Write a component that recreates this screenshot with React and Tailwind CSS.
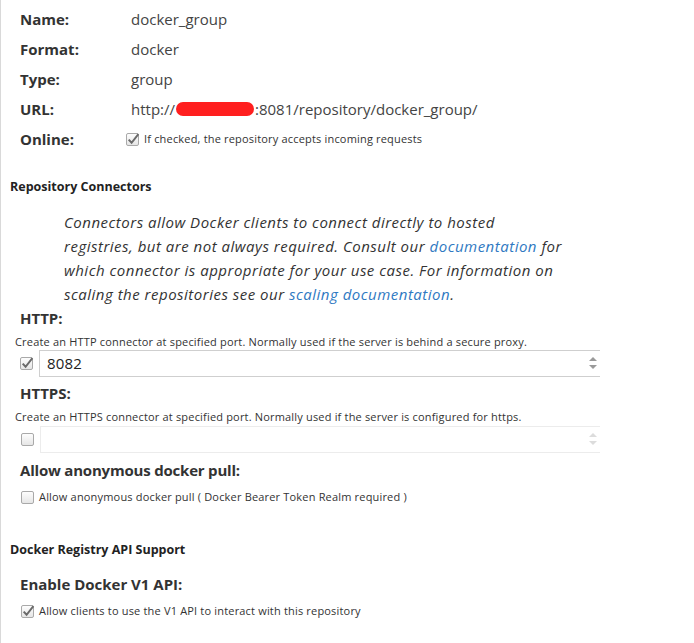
import React from 'react';

const font = { fontFamily: '"Open Sans", Arial, sans-serif' };

function Check({ checked, className = '' }) {
  return (
    <span className={`relative inline-block h-[13px] w-[13px] shrink-0 rounded-[2px] border border-[#a9a9a9] bg-gradient-to-b from-[#fdfdfd] to-[#e6e6e6] ${className}`}>
      {checked && (
        <svg viewBox="0 0 13 13" className="absolute left-[-1px] top-[-2px] h-[14px] w-[14px]">
          <path d="M2.5 7 L5.2 10 L11.5 2" fill="none" stroke="#6a6a6a" strokeWidth="1.8" />
        </svg>
      )}
    </span>
  );
}

function PortInput({ value, disabled }) {
  return (
    <div className={`flex h-[27px] flex-1 items-center border-y border-l ${disabled ? 'border-[#ececec]' : 'border-[#cfcfcf]'} pl-[7px] pr-[3px]`}>
      <span className="flex-1 text-[15px] text-[#222]">{value}</span>
      <svg viewBox="0 0 8 12" className="h-[12px] w-[8px]">
        <path d="M0 4 L4 0 L8 4 Z M0 8 L8 8 L4 12 Z" fill={disabled ? '#dcdcdc' : '#9a9a9a'} />
      </svg>
    </div>
  );
}

const rows = [
  ['Name:', 'docker_group'],
  ['Format:', 'docker'],
  ['Type:', 'group'],
];

export default function App() {
  return (
    <div className="min-h-[643px] w-[694px] border-l border-[#d9d9d9] bg-white text-[#333]" style={font}>
      <div className="pt-[4px]">
        {rows.map(([label, value]) => (
          <div key={label} className="flex h-[30px] items-center">
            <span className="w-[130px] pl-[19px] text-[15px] font-bold text-[#333]">{label}</span>
            <span className="text-[15px] text-[#444]">{value}</span>
          </div>
        ))}
        <div className="flex h-[30px] items-center">
          <span className="w-[130px] pl-[19px] text-[15px] font-bold text-[#333]">URL:</span>
          <span className="flex items-center text-[15px] text-[#444]">
            http://
            <span className="mx-[1px] inline-block h-[14px] w-[78px] rounded-[7px] bg-[#ff1f1f]" />
            :8081/repository/docker_group/
          </span>
        </div>
        <div className="flex h-[30px] items-center">
          <span className="w-[125px] pl-[19px] text-[15px] font-bold text-[#333]">Online:</span>
          <Check checked />
          <span className="ml-[5px] text-[11px] tracking-[0.18px] text-[#333]">If checked, the repository accepts incoming requests</span>
        </div>
      </div>

      <h3 className="mt-[24px] pl-[9px] text-[12.5px] font-bold text-[#222]">Repository Connectors</h3>

      <p className="mt-[13px] box-content w-[500px] pl-[63px] text-[15px] italic leading-[24px] tracking-[0.5px] text-[#333]">
        Connectors allow Docker clients to connect directly to hosted registries, but are not always required. Consult our{' '}
        <a className="text-[#2f79c2]">documentation</a> for which connector is appropriate for your use case. For information on
        scaling the repositories see our <a className="text-[#2f79c2]">scaling documentation</a>.
      </p>

      <div className="w-[599px] pl-[14px] tracking-[0.18px]">
        <h4 className="mt-[2px] pl-[5px] text-[15px] font-bold leading-[20px] tracking-normal">HTTP:</h4>
        <p className="mt-[7px] text-[11px] leading-[14px] text-[#333]">
          Create an HTTP connector at specified port. Normally used if the server is behind a secure proxy.
        </p>
        <div className="mt-[1px] flex items-center gap-[6px] pl-[5px]">
          <Check checked />
          <PortInput value="8082" />
        </div>

        <h4 className="mt-[6px] pl-[5px] text-[15px] font-bold leading-[20px] tracking-normal">HTTPS:</h4>
        <p className="mt-[7px] text-[11px] leading-[14px] text-[#333]">
          Create an HTTPS connector at specified port. Normally used if the server is configured for https.
        </p>
        <div className="mt-[2px] flex items-center gap-[6px] pl-[6px]">
          <Check />
          <PortInput value="" disabled />
        </div>

        <h4 className="mt-[7px] pl-[5px] text-[15px] font-bold leading-[20px] tracking-[-0.2px]">Allow anonymous docker pull:</h4>
        <div className="mt-[9px] flex items-center gap-[5px] pl-[6px]">
          <Check />
          <span className="text-[11px] text-[#333]">Allow anonymous docker pull ( Docker Bearer Token Realm required )</span>
        </div>
      </div>

      <h3 className="mt-[36px] pl-[9px] text-[12.5px] font-bold text-[#222]">Docker Registry API Support</h3>

      <div className="pl-[19px]">
        <h4 className="mt-[14px] text-[15px] font-bold leading-[20px]">Enable Docker V1 API:</h4>
        <div className="mt-[9px] flex items-center gap-[5px] pl-[1px]">
          <Check checked />
          <span className="text-[11px] tracking-[0.18px] text-[#333]">Allow clients to use the V1 API to interact with this repository</span>
        </div>
      </div>
    </div>
  );
}
